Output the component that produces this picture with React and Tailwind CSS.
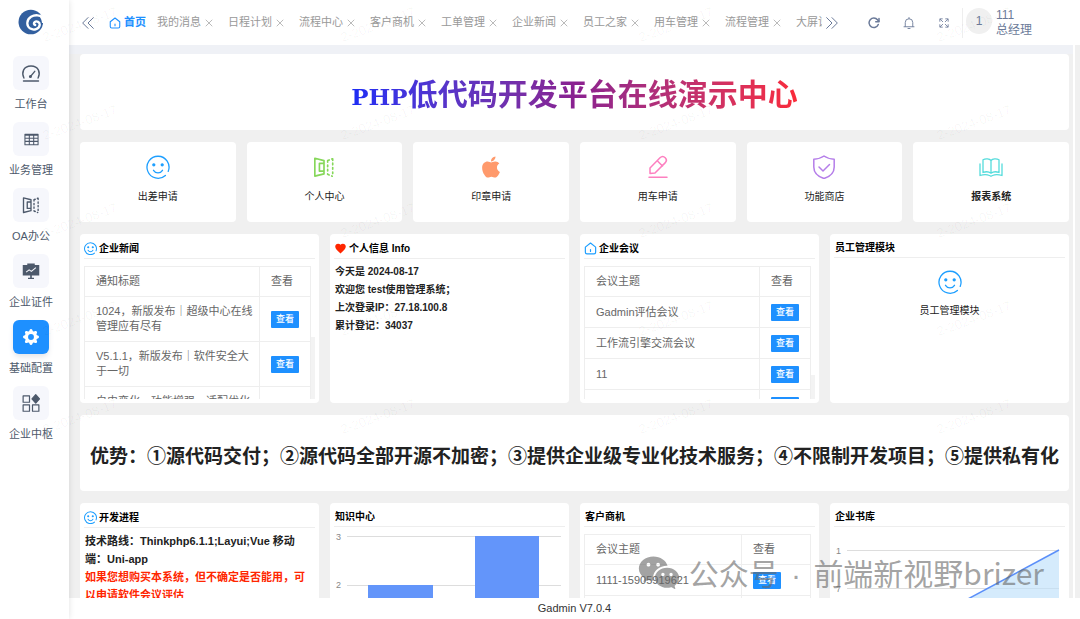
import React from 'react';
import { AiFillApple } from 'react-icons/ai';
import { IoMdHeart } from 'react-icons/io';
import { BsGearFill } from 'react-icons/bs';
import { RiWechatFill } from 'react-icons/ri';

function Logo() {
  return (
    <svg viewBox="0 0 26 26" className="h-[26px] w-[26px]" aria-hidden="true">
      <circle cx="12.800" cy="13" r="12.300" fill="#325f9f" />
      <path
        d="M26.500 9.500C22.500 5.400 16.500 5.600 13 7.800 8.200 11 8.200 17 12.300 19.600 16 21.800 21 20 21.700 16.300 22.200 13 18.500 11.500 16.600 13.200 15.500 14.200 15.900 15.800 17.200 16"
        fill="none"
        stroke="#fff"
        strokeWidth="2.300"
        strokeLinecap="round"
      />
      <path d="M26 8.500 21.500 7.500C23 9.500 23.800 11.500 24 14h2z" fill="#fff" />
    </svg>
  );
}

function Line({ className, children, w = 1.5 }) {
  return (
    <svg
      viewBox="0 0 24 24"
      className={className}
      fill="none"
      stroke="currentColor"
      strokeWidth={w}
      strokeLinecap="round"
      strokeLinejoin="round"
      aria-hidden="true"
    >
      {children}
    </svg>
  );
}

const Smile = ({ className, w = 1.3 }) => (
  <Line className={className} w={w}>
    <path d="M22.200 16.400A11 11 0 1 0 19.400 20.400" />
    <path d="M7.500 15.300c1.200 1.900 2.700 2.600 4.500 2.600s3.300-.7 4.500-2.600" />
    <circle cx="7.800" cy="9.800" r="1" fill="currentColor" />
    <circle cx="16.200" cy="9.800" r="1" fill="currentColor" />
  </Line>
);

const Home = ({ className }) => (
  <Line className={className} w={2.200}>
    <path d="M2.500 9.500 12 2l9.500 7.500V19a3 3 0 0 1-3 3h-13a3 3 0 0 1-3-3zM12 14v3.500" />
  </Line>
);

const Gauge = ({ className }) => (
  <Line className={className} w={1.700}>
    <path d="M3.500 18C.5 12 2.500 3.500 12 3.500S23.500 12 20.500 18M3 21.500h18M11.500 16l5-6" />
    <circle cx="11.300" cy="16.200" r="1" fill="currentColor" />
  </Line>
);

const Grid = ({ className }) => (
  <Line className={className} w={1.700}>
    <path d="M1.500 3.500h21v17h-21zM1.500 5h21M1.500 10h21M1.500 15h21M8.500 4v16M15.500 4v16" />
  </Line>
);

const Mirror = ({ className }) => (
  <Line className={className} w={1.800}>
    <path d="M2 2.500 12 5v14.500L2 22zM7 8h5M7 8v8.500h5" />
    <path d="M16 5v15M21.500 3v19M16 5l5-2M16 20l5 2" strokeDasharray="1.800 3" />
  </Line>
);

const Board = ({ className }) => (
  <svg viewBox="0 0 24 24" className={className} aria-hidden="true">
    <path fill="currentColor" d="M7 2h10v2h6v14h-9.900v3H16v1.500H8V21h2.900v-3H1V4h6z" />
    <path d="m5.500 13.500 4-3 3 2 6-5" fill="none" stroke="#f6f7fc" strokeWidth="1.500" />
  </svg>
);

const Blocks = ({ className }) => (
  <Line className={className} w={1.600}>
    <path d="M1.500 2.500h8.500V11H1.500zM1.500 14.500h8.500V23H1.500zM14 14.500h8.500V23H14z" />
    <path d="m18.300 1 5 5.500-5 5.500-5-5.500z" fill="currentColor" />
  </Line>
);

const Pencil = ({ className }) => (
  <Line className={className} w={1.500}>
    <path d="M4 18.500V13L14 2.800c1.600-1.600 3.700-1.600 5.200-.1s1.500 3.600-.1 5.200L9 18zM11.500 6l5 5M3 22.300h18" />
  </Line>
);

const Shield = ({ className }) => (
  <Line className={className} w={1.500}>
    <path d="M12 1c3 2.200 6.500 3 10.200 3.200V12c0 6-4 9.500-10.200 11.500C5.800 21.500 1.800 18 1.800 12V4.200C5.500 4 9 3.200 12 1z" />
    <path d="m7 12 4 4 6.500-6.500" />
  </Line>
);

const Book = ({ className }) => (
  <Line className={className} w={1.300}>
    <path d="M12 5.500C10.500 3.500 6.500 3.300 4 4.700v12.800c3-1.200 6-.8 8 .7 2-1.500 5-1.900 8-.7V4.700c-2.500-1.400-6.500-1.200-8 .8zM12 5.500v12.500M1 9v11.500c3.500-1 7-1 9.500 0l1.500.8 1.500-.8c2.500-1 6-1 9.500 0V9" />
  </Line>
);

const tabs = ['我的消息', '日程计划', '流程中心', '客户商机', '工单管理', '企业新闻', '员工之家', '用车管理', '流程管理', '大屏设计'];

const menu = [
  { label: '工作台', icon: <Gauge className="h-5 w-5" /> },
  { label: '业务管理', icon: <Grid className="h-[15px] w-[15px]" /> },
  { label: 'OA办公', icon: <Mirror className="h-[18px] w-[18px]" /> },
  { label: '企业证件', icon: <Board className="h-[18px] w-[18px]" /> },
  { label: '基础配置', icon: <BsGearFill className="h-4 w-4" />, active: true },
  { label: '企业中枢', icon: <Blocks className="h-[18px] w-[18px]" /> },
];

const shortcuts = [
  { label: '出差申请', icon: <Smile className="h-6 w-6 text-[#1e9fff]" /> },
  { label: '个人中心', icon: <Mirror className="h-[22px] w-[22px] text-[#86d75a]" /> },
  { label: '印章申请', icon: <AiFillApple className="h-[26px] w-[26px] text-[#ff9a6c]" /> },
  { label: '用车申请', icon: <Pencil className="h-6 w-6 text-[#fd80c0]" /> },
  { label: '功能商店', icon: <Shield className="h-6 w-6 text-[#b57ee9]" /> },
  { label: '报表系统', icon: <Book className="h-6 w-6 text-[#55dcdc]" />, strong: true },
];

const marks = Array.from({ length: 20 }, (_, i) => i);

function Sidebar() {
  return (
    <nav className="z-10 flex w-[69px] shrink-0 flex-col items-center bg-white pr-[7px] shadow-[0_0_6px_rgba(0,0,0,0.12)]">
      <a href="#home" aria-label="Gadmin" className="mt-[9px] mb-[21px]">
        <Logo />
      </a>
      {menu.map((m) => (
        <a key={m.label} href="#menu" className="flex h-[66px] flex-col items-center gap-1 text-[11px] leading-5 text-[#4d596b]">
          <span
            className={
              m.active
                ? 'flex h-[34px] w-9 items-center justify-center rounded-md bg-[#1e90ff] text-white shadow-md shadow-gray-200'
                : 'flex h-[34px] w-9 items-center justify-center rounded-md bg-[#f6f7fc]'
            }
          >
            {m.icon}
          </span>
          <span className="whitespace-nowrap">{m.label}</span>
        </a>
      ))}
    </nav>
  );
}

function Header() {
  return (
    <header className="flex h-[45px] shrink-0 items-center bg-white text-[#6b7a99]">
      <button type="button" aria-label="向左" className="ml-[11px] flex w-4 shrink-0 justify-center">
        <Line className="h-4 w-4"><path d="M12 4 4 12l8 8M20 4l-8 8 8 8" /></Line>
      </button>
      <a href="#home" className="ml-[13px] flex shrink-0 items-center gap-[3px] text-[11px] font-bold text-[#1e90ff]">
        <Home className="h-3 w-3" />
        首页
      </a>
      <div className="ml-[11px] flex min-w-0 flex-1 gap-[15px] overflow-hidden">
        {tabs.map((t) => (
          <div key={t} className="flex shrink-0 items-center gap-1 text-[11px] text-[#999]">
            <a href="#tab">{t}</a>
            <button type="button" aria-label={`关闭${t}`}>
              <Line className="h-2 w-2" w={2}><path d="m3 3 18 18M21 3 3 21" /></Line>
            </button>
          </div>
        ))}
      </div>
      <button type="button" aria-label="向右" className="mr-4 ml-px flex w-[18px] shrink-0 justify-center">
        <Line className="h-4 w-4"><path d="m4 4 8 8-8 8M12 4l8 8-8 8" /></Line>
      </button>
      <button type="button" aria-label="刷新" className="flex w-[35px] shrink-0 justify-center">
        <Line className="h-3 w-3" w={3}><path d="M20.500 15A9.500 9.500 0 1 1 19 5.500l2.500 3" /><path d="M22 3v6.500h-6.500" /></Line>
      </button>
      <button type="button" aria-label="通知" className="flex w-[35px] shrink-0 justify-center">
        <Line className="h-3 w-3" w={1.800}><path d="M2 19.500h20M4.500 19V11a7.500 7.500 0 0 1 15 0v8M10 23h4M12 1v2" /></Line>
      </button>
      <button type="button" aria-label="全屏" className="flex w-[35px] shrink-0 justify-center">
        <Line className="h-2.5 w-2.5" w={2}>
          <path d="M2 8V2h6M16 2h6v6M22 16v6h-6M8 22H2v-6M3 3l6 6M21 3l-6 6M21 21l-6-6M3 21l6-6" />
        </Line>
      </button>
      <div className="flex shrink-0 border-l border-[#eee] pr-12 pl-[3px]">
        <div className="flex h-[26px] w-[26px] items-center justify-center rounded-full bg-[#f0f0f0] text-xs">1</div>
        <div className="ml-1 text-xs leading-[15px]">
          <div>111</div>
          <div>总经理</div>
        </div>
      </div>
    </header>
  );
}

function Card({ title, icon, children }) {
  return (
    <section className="flex h-[169px] min-w-0 flex-col rounded bg-white p-1">
      <h2
        className={
          icon
            ? 'flex h-[21px] shrink-0 items-center gap-0.5 border-b border-[#eee] text-[10px] font-bold text-black'
            : 'flex h-5 shrink-0 items-center border-b border-[#eee] px-px text-[10px] font-bold text-black'
        }
      >
        {icon}
        {title}
      </h2>
      <div className="relative min-h-0 flex-1 overflow-hidden">{children}</div>
    </section>
  );
}

function ViewTable({ head, rows, wide, thumb }) {
  return (
    <div className="flex h-full items-end">
      <div className="h-full min-w-0 flex-1 pt-[7px]">
        <table className="w-full table-fixed border-collapse text-left text-[11px] leading-[15px] text-[#666]">
          <thead>
            <tr>
              <th className="h-[30px] border border-[#eee] pl-[11px] font-normal">{head}</th>
              <th className={wide ? 'w-[69px] border border-[#eee] pl-[11px] font-normal' : 'w-[51px] border border-[#eee] pl-[11px] font-normal'}>查看</th>
            </tr>
          </thead>
          <tbody>
            {rows.map((r) => (
              <tr key={r}>
                <td className="h-[31px] border border-[#eee] py-[7px] pr-1 pl-[11px]">{r}</td>
                <td className="border border-[#eee] pl-[11px]">
                  <button type="button" className="block h-[17px] w-7 rounded-[1px] bg-[#1e90ff] text-[9px] leading-[17px] font-medium text-white">
                    查看
                  </button>
                </td>
              </tr>
            ))}
          </tbody>
        </table>
      </div>
      <div className="flex h-full w-1 items-end">
        <div className={thumb} />
      </div>
    </div>
  );
}

function BarChart() {
  return (
    <svg viewBox="0 0 231 156" className="block w-full" role="img" aria-label="知识中心">
      <path d="M13 9.500h214M13 58.500h214M13 106.500h214M13 154.500h214" stroke="#ddd" />
      <g fill="#888" fontSize="9">
        <text x="2" y="13">3</text>
        <text x="2" y="61">2</text>
        <text x="2" y="110">1</text>
      </g>
      <rect x="34" y="58" width="65" height="97" fill="#6395fa" />
      <rect x="141" y="9" width="64" height="146" fill="#6395fa" />
    </svg>
  );
}

function AreaChart() {
  return (
    <svg viewBox="0 0 231 156" className="block w-full" role="img" aria-label="企业书库">
      <path d="M13 23.500h212M13 61.500h212M13 99.500h212" stroke="#ddd" />
      <g fill="#888" fontSize="9">
        <text x="2" y="27">1</text>
        <text x="2" y="65">7</text>
      </g>
      <path d="M13 137 225 23v133H13z" fill="#bfe0fb" fillOpacity="0.65" />
      <path d="M13 137 225 23" fill="none" stroke="#5b8ff9" strokeWidth="1.500" />
    </svg>
  );
}

const smallSmile = <Smile className="h-[13px] w-[13px] text-[#1e9fff]" w={1.900} />;

function Content() {
  return (
    <main className="flex min-h-0 flex-1 overflow-hidden bg-[#f0f0f0]">
      <div className="min-w-0 flex-1 pl-[11px]">
        <div className="-ml-[11px] h-[9px] bg-[#eff1f6]" />
        <div className="flex flex-col gap-3 pr-1">
          <section className="flex h-[76px] items-center justify-center rounded bg-white pt-2.5">
            <h1 className="bg-linear-to-r from-[#1a2cf5] via-[#8a2090] to-[#fa2a38] bg-clip-text font-['DejaVu_Serif','Noto_Sans_CJK_SC',serif] text-[23px] leading-10 font-bold text-transparent">
              PHP<span className="text-3xl">低代码开发平台在线演示中心</span>
            </h1>
          </section>

          <div className="grid grid-cols-6 gap-[11px]">
            {shortcuts.map((s) => (
              <a key={s.label} href="#app" className="flex h-20 flex-col items-center gap-[9px] rounded bg-white pt-3 text-[10px] leading-4 text-[#222]">
                <span className="flex h-[26px] items-center">{s.icon}</span>
                <span className={s.strong ? 'font-bold' : ''}>{s.label}</span>
              </a>
            ))}
          </div>

          <div className="grid grid-cols-4 gap-[11px]">
            <Card title="企业新闻" icon={smallSmile}>
              <ViewTable
                head="通知标题"
                rows={['1024，新版发布｜超级中心在线管理应有尽有', 'V5.1.1，新版发布｜软件安全大于一切', '自由变化、功能增强、适配优化新版发布']}
                thumb="h-[62px] w-1 bg-[#f3f3f3]"
              />
            </Card>
            <Card title="个人信息 Info" icon={<IoMdHeart className="h-[13px] w-[13px] text-[#ff2600]" />}>
              <div className="px-px pt-1 text-[10px] leading-[18px] font-bold text-[#222]">
                <p>今天是 2024-08-17</p>
                <p>欢迎您 test使用管理系统；</p>
                <p>上次登录IP：27.18.100.8</p>
                <p>累计登记：34037</p>
              </div>
            </Card>
            <Card title="企业会议" icon={<Home className="h-[13px] w-[13px] text-[#1e9fff]" />}>
              <ViewTable
                head="会议主题"
                rows={['Gadmin评估会议', '工作流引擎交流会议', '11', '12']}
                thumb="h-6 w-1 bg-[#f3f3f3]"
              />
            </Card>
            <Card title="员工管理模块">
              <a href="#staff" className="flex flex-col items-center gap-[9px] pt-3 text-[10px] leading-4 text-[#222]">
                <Smile className="h-6 w-6 text-[#1e9fff]" />
                员工管理模块
              </a>
            </Card>
          </div>

          <section className="flex h-[76px] items-center justify-center overflow-hidden rounded bg-white pt-2 text-[19px] font-bold whitespace-nowrap text-[#222]">
            优势：①源代码交付；②源代码全部开源不加密；③提供企业级专业化技术服务；④不限制开发项目；⑤提供私有化
          </section>

          <div className="grid grid-cols-4 gap-[11px]">
            <Card title="开发进程" icon={smallSmile}>
              <div className="pt-1 pr-0.5 pl-px text-[11px] leading-[18px] font-bold text-[#222]">
                <p>技术路线：Thinkphp6.1.1;Layui;Vue 移动端：Uni-app</p>
                <p className="text-[#ff2600]">如果您想购买本系统，但不确定是否能用，可以申请软件会议评估</p>
              </div>
            </Card>
            <Card title="知识中心">
              <BarChart />
            </Card>
            <Card title="客户商机">
              <ViewTable head="会议主题" rows={['1111-15905919621', '1112', '1113']} wide thumb="hidden" />
            </Card>
            <Card title="企业书库">
              <AreaChart />
            </Card>
          </div>
        </div>
      </div>
      <div className="w-[7px] shrink-0 border-l-2 border-white bg-[#f0f0f0]" />
    </main>
  );
}

export default function App() {
  return (
    <div className="relative flex h-screen overflow-hidden bg-white font-['Liberation_Sans','Noto_Sans_CJK_SC',sans-serif]">
      <Sidebar />
      <div className="flex min-w-0 flex-1 flex-col">
        <Header />
        <Content />
        <footer className="h-[21px] shrink-0 bg-white text-center text-[11px] leading-5 text-[#333]">Gadmin V7.0.4</footer>
      </div>

      <div aria-hidden="true" className="pointer-events-none absolute inset-0 z-20 grid auto-rows-[98px] grid-cols-[repeat(4,298px)] overflow-hidden pl-10">
        {marks.map((i) => (
          <div key={i} className="flex h-[49px] w-20 items-center justify-center text-[13px] text-black/4">
            <span className="-rotate-[20deg] whitespace-nowrap">2-2024-08-17</span>
          </div>
        ))}
      </div>

      <div className="pointer-events-none absolute right-9 bottom-6 z-30 flex items-center gap-2 font-['Noto_Sans_CJK_SC',sans-serif] text-3xl whitespace-nowrap text-[#666]/60">
        <RiWechatFill className="h-11 w-11" />
        <span>
          公众号<span className="px-1 font-['Liberation_Sans',sans-serif]"> · </span>前端新视野brizer
        </span>
      </div>
    </div>
  );
}
